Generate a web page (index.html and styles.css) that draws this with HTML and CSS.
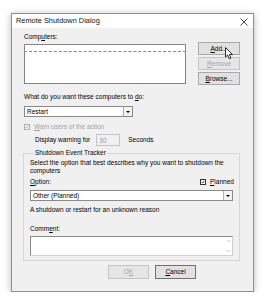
FILE: index.html
```html
<!DOCTYPE html>
<html lang="en">
<head>
<meta charset="UTF-8">
<meta name="viewport" content="width=device-width, initial-scale=1.0">
<title>Remote Shutdown Dialog</title>
<link rel="stylesheet" href="styles.css">
</head>
<body>
<div id="dialog">
    <div class="titlebar">
        <span class="title">Remote Shutdown Dialog</span>
        <svg class="close" width="8" height="8" viewBox="0 0 8 8"><path d="M0.5 0.5L7.5 7.5M7.5 0.5L0.5 7.5" stroke="#333" stroke-width="0.9"/></svg>
    </div>
    <div class="content">
        <div class="label">Comp<u>u</u>ters:</div>
        <div class="computers">
            <div class="listbox"><div class="focus"></div></div>
            <div class="side">
                <a class="btn"><u>A</u>dd...</a>
                <a class="btn off"><u>R</u>emove</a>
                <a class="btn"><u>B</u>rowse...</a>
            </div>
        </div>
        <div class="label what">What do you want these computers to <u>d</u>o:</div>
        <div class="combo action"><span>Restart</span><span class="arrow"><i></i></span></div>
        <div class="check-row off">
            <span class="checkbox"><svg width="6" height="6" viewBox="0 0 6 6"><path d="M1 3L2.4 4.5L5 1.2" fill="none" stroke="#a0a0a0" stroke-width="1"/></svg></span>
            <span><u>W</u>arn users of the action</span>
        </div>
        <div class="warn-row">
            <span>Display warning for</span>
            <span class="textbox">30</span>
            <span>Seconds</span>
        </div>
        <fieldset class="group">
            <legend>Shutdown Event Tracker</legend>
            <p class="text">Select the option that best describes why you want to shutdown the computers</p>
            <div class="option-row">
                <span><u>O</u>ption:</span>
                <span class="planned">
                    <span class="checkbox on"><svg width="6" height="6" viewBox="0 0 6 6"><path d="M1 3L2.4 4.5L5 1.2" fill="none" stroke="#000" stroke-width="1"/></svg></span>
                    <span><u>P</u>lanned</span>
                </span>
            </div>
            <div class="combo reason"><span>Other (Planned)</span><span class="arrow"><i></i></span></div>
            <p class="text desc">A shutdown or restart for an unknown reason</p>
            <div class="label comment-label">Comm<u>e</u>nt:</div>
            <div class="comment">
                <div class="scroll">
                    <svg width="5" height="4" viewBox="0 0 5 4"><path d="M0.5 3L2.5 1L4.5 3" fill="none" stroke="#c0c0c0" stroke-width="0.8"/></svg>
                    <svg width="5" height="4" viewBox="0 0 5 4"><path d="M0.5 1L2.5 3L4.5 1" fill="none" stroke="#c0c0c0" stroke-width="0.8"/></svg>
                </div>
            </div>
        </fieldset>
        <div class="footer">
            <a class="btn big off">O<u>K</u></a>
            <a class="btn big dark"><u>C</u>ancel</a>
        </div>
    </div>
    <svg class="cursor" width="9" height="13" viewBox="0 0 9 13"><path d="M0.5 0.5L0.5 10L2.7 8L4.3 11.8L5.9 11.1L4.4 7.5L7.5 7.5Z" fill="#fff" stroke="#000" stroke-width="0.8" stroke-linejoin="round"/></svg>
</div>
</body>
</html>
```

FILE: styles.css
```css
* {box-sizing: border-box;}
html, body {margin: 0;padding: 0;background: #fff;}
body {padding: 13px 0 0 11px;font: 6.5px/8px "Liberation Sans", Arial, sans-serif;color: #000;}
u {text-decoration: underline;text-underline-offset: 1px;text-decoration-thickness: 0.5px;}
p {margin: 0;}

#dialog {position: relative;width: 243px;height: 279px;border: 1px solid #8f8f8f;background: #f0f0f0;box-shadow: 0 1px 7px rgba(0, 0, 0, .28);}
.titlebar {display: flex;align-items: center;justify-content: space-between;height: 14px;padding: 0 5px 0 4px;background: #fff;}
.title {font-size: 7.4px;color: #111;}
.close {display: block;margin-top: 1px;}

.content {padding: 5px 13px 0 12px;}
.computers {display: flex;justify-content: space-between;margin-top: 1px;}
.listbox {width: 162px;height: 40px;margin-top: 2px;background: #fff;border: 1px solid #7f8489;}
.focus {height: 8px;border: 1px dashed #8a8a8a;margin: -1px -1px 0 -1px;}
.side {display: flex;flex-direction: column;gap: 2px;}

.btn {display: flex;align-items: center;justify-content: center;width: 42px;height: 13px;background: #e1e1e1;border: 1px solid #a8a8a8;color: #000;}
.btn.off {color: #a3a3a3;background: #e6e6e6;border-color: #c4c4c4;}
.btn.big {width: 41px;height: 14px;}
.btn.dark {border-color: #707070;}

.what {margin-top: 8px;}
.combo {display: flex;align-items: center;justify-content: space-between;height: 11px;background: #fff;border: 1px solid #8a8a8a;padding-left: 2px;}
.combo .arrow {display: flex;align-items: center;justify-content: center;width: 9px;height: 9px;border-left: 1px solid #b0b0b0;background: #f2f2f2;}
.combo .arrow i {border-left: 2px solid transparent;border-right: 2px solid transparent;border-top: 2px solid #000;}
.action {width: 109px;margin-top: 5px;}

.check-row {display: flex;align-items: center;gap: 4px;margin-top: 6px;}
.check-row.off {color: #a0a0a0;}
.checkbox {display: flex;align-items: center;justify-content: center;width: 6px;height: 6px;border: 1px solid #adadad;background: #f4f4f4;}
.checkbox.on {border-color: #333;background: #fff;}
.checkbox svg {display: block;}

.warn-row {display: flex;align-items: center;height: 12px;margin-top: 3px;padding-left: 11px;}
.textbox {width: 24px;height: 12px;margin: 0 8px 0 6px;padding: 2px 0 0 2px;border: 1px solid #c4c4c4;background: #f0f0f0;color: #9a9a9a;}

.group {margin: 3px 0 0 -1px;padding: 2px 6px 4px 6px;border: 1px solid #d6d6d6;min-width: 0;}
.group legend {padding: 0 1px;margin-left: 4px;line-height: 8px;}
.option-row {display: flex;justify-content: space-between;margin-top: 3px;}
.planned {display: flex;align-items: center;gap: 4px;width: 33px;}
.reason {margin-top: 4px;}
.desc {margin-top: 5px;}
.comment-label {margin-top: 11px;}
.comment {display: flex;justify-content: flex-end;height: 20px;margin-top: 3px;background: #fff;border: 1px solid #d0d0d0;border-top-color: #8a8a8a;border-left-color: #8a8a8a;}
.scroll {display: flex;flex-direction: column;justify-content: space-between;align-items: center;width: 8px;padding: 2px 0;}
.scroll svg {display: block;}

.footer {display: flex;justify-content: flex-end;gap: 6px;margin: 4px 44px 0 0;}
.cursor {position: absolute;left: 213px;top: 33px;}
```
